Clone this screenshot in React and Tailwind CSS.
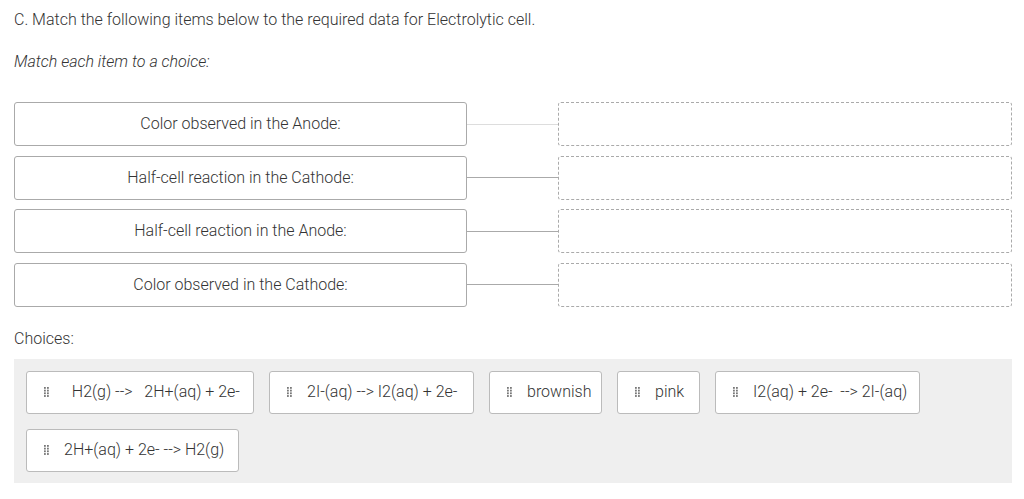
const prompts = [
  'Color observed in the Anode:',
  'Half-cell reaction in the Cathode:',
  'Half-cell reaction in the Anode:',
  'Color observed in the Cathode:',
];

const choices = [
  { label: '\u00a0\u00a0H2(g) -->\u00a0\u00a0 2H+(aq) + 2e-', w: 'w-[228px]' },
  { label: '2I-(aq) --> I2(aq) + 2e-', w: 'w-[205px]' },
  { label: 'brownish', w: 'w-[113px]' },
  { label: 'pink', w: 'w-[83px]' },
  { label: 'I2(aq) + 2e-\u00a0 --> 2I-(aq)', w: 'w-[205px]' },
  { label: '2H+(aq) + 2e- --> H2(g)', w: 'w-[213px]' },
];

function Grip() {
  return (
    <svg width="5" height="10" viewBox="0 0 5 10" className="shrink-0">
      {[0, 2.7, 5.4, 8.1].map((y) => (
        <g key={y} fill="#777">
          <rect x="0" y={y} width="1.8" height="1.8" />
          <rect x="3" y={y} width="1.8" height="1.8" />
        </g>
      ))}
    </svg>
  );
}

export default function App() {
  return (
    <div className="w-[1024px] h-[499px] bg-white pl-[14px] pr-[12px] pt-[10px] text-[#333] font-light" style={{ fontFamily: 'Roboto, sans-serif' }}>
      <p className="text-[16px] leading-[20px]">C. Match the following items below to the required data for Electrolytic cell.</p>
      <p className="mt-[22px] text-[16px] leading-[20px] italic">Match each item to a choice:</p>

      <div className="mt-[30px] flex flex-col gap-[9.6px]">
        {prompts.map((p, i) => (
          <div key={p} className="flex items-center h-[44px]">
            <div className="w-[453px] h-full rounded-[3px] border border-[#aaa] flex items-center justify-center text-[16px]">
              {p}
            </div>
            <div className={`w-[91px] h-px ${i === 0 ? 'bg-[#ddd]' : 'bg-[#aaa]'}`} />
            <div className="flex-1 h-full rounded-[3px] border border-dashed border-[#aaa]" />
          </div>
        ))}
      </div>

      <p className="mt-[22px] text-[16px] leading-[20px]">Choices:</p>

      <div className="mt-[10px] h-[124px] bg-[#efefef] px-[12px] pt-[12px] flex flex-wrap content-start gap-x-[15px] gap-y-[15px]">
        {choices.map((c) => (
          <div key={c.label} className={`${c.w} h-[43px] bg-white rounded-[3px] border border-[#bbb] flex items-center pl-[17px] gap-[15px] text-[16px]`}>
            <Grip />
            <span className="whitespace-pre">{c.label}</span>
          </div>
        ))}
      </div>
    </div>
  );
}
